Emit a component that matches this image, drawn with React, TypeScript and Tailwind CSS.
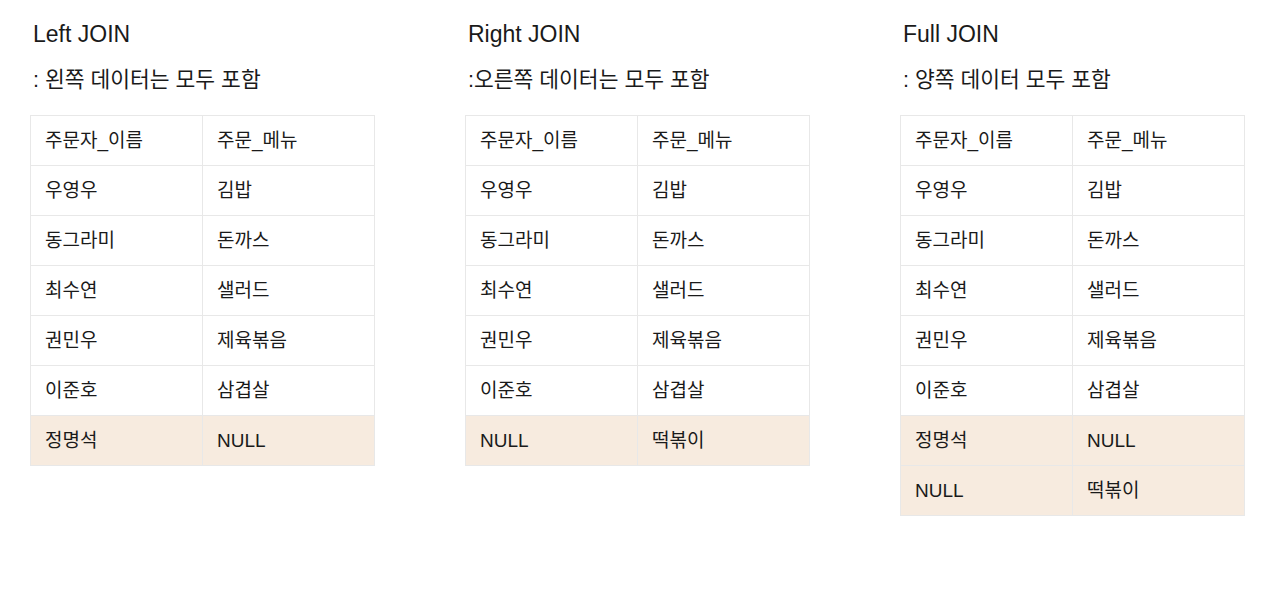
const FONT = "font-['Liberation_Sans','Noto_Sans_CJK_KR',sans-serif]";

type Row = { name: string; menu: string; hl?: boolean };

const BASE: Row[] = [
  { name: '우영우', menu: '김밥' },
  { name: '동그라미', menu: '돈까스' },
  { name: '최수연', menu: '샐러드' },
  { name: '권민우', menu: '제육볶음' },
  { name: '이준호', menu: '삼겹살' },
];

const JOINS: { title: string; desc: string; extra: Row[] }[] = [
  { title: 'Left JOIN', desc: ': 왼쪽 데이터는 모두 포함', extra: [{ name: '정명석', menu: 'NULL', hl: true }] },
  { title: 'Right JOIN', desc: ':오른쪽 데이터는 모두 포함', extra: [{ name: 'NULL', menu: '떡볶이', hl: true }] },
  {
    title: 'Full JOIN',
    desc: ': 양쪽 데이터 모두 포함',
    extra: [
      { name: '정명석', menu: 'NULL', hl: true },
      { name: 'NULL', menu: '떡볶이', hl: true },
    ],
  },
];

function Cell({ children }: { children: React.ReactNode }) {
  return (
    <td className="w-[172px] h-[50px] border border-[#e8e8e8] px-[14px] pt-[2px] text-[19px] text-[#1a1a1a] align-middle">
      {children}
    </td>
  );
}

export default function App() {
  return (
    <div className={`w-[1280px] h-[602px] bg-white ${FONT}`}>
      <div className="flex pl-[30px]">
        {JOINS.map((j) => (
          <div key={j.title} className="w-[435px] shrink-0">
            <h2 className="pl-[3px] pt-[20px] text-[23px] leading-[28px] text-[#1a1a1a]">{j.title}</h2>
            <p className="pl-[3px] mt-[18px] text-[21.5px] leading-[28px] text-[#1a1a1a]">{j.desc}</p>
            <table className="mt-[21px] border-collapse">
              <tbody>
                <tr>
                  <Cell>주문자_이름</Cell>
                  <Cell>주문_메뉴</Cell>
                </tr>
                {[...BASE, ...j.extra].map((r) => (
                  <tr key={r.name + r.menu} className={r.hl ? 'bg-[#f7ebdf]' : ''}>
                    <Cell>{r.name}</Cell>
                    <Cell>{r.menu}</Cell>
                  </tr>
                ))}
              </tbody>
            </table>
          </div>
        ))}
      </div>
    </div>
  );
}
